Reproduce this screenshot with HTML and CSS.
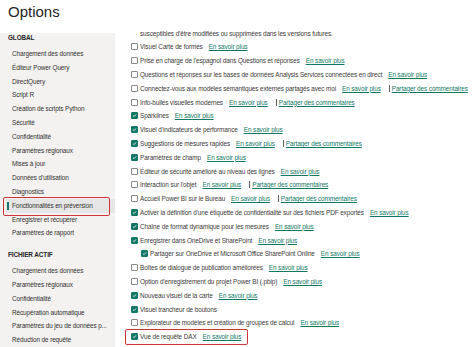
FILE: index.html
```html
<!DOCTYPE html>
<html lang="fr">
  <head>
    <meta charset="UTF-8" />
    <meta name="viewport" content="width=device-width, initial-scale=1.0" />
    <title>Options</title>
    <link rel="stylesheet" href="styles.css">
  </head>
  <body>
    <header class="title">Options</header>
    <div class="layout">
      <nav class="sidebar">
        <div class="nav-head">GLOBAL</div>
        <ul class="nav-list">
          <li>Chargement des données</li>
          <li>Éditeur Power Query</li>
          <li>DirectQuery</li>
          <li>Script R</li>
          <li>Création de scripts Python</li>
          <li>Sécurité</li>
          <li>Confidentialité</li>
          <li>Paramètres régionaux</li>
          <li>Mises à jour</li>
          <li>Données d'utilisation</li>
          <li>Diagnostics</li>
          <li class="selected">Fonctionnalités en préversion</li>
          <li>Enregistrer et récupérer</li>
          <li>Paramètres de rapport</li>
        </ul>
        <div class="nav-head second">FICHIER ACTIF</div>
        <ul class="nav-list">
          <li>Chargement des données</li>
          <li>Paramètres régionaux</li>
          <li>Confidentialité</li>
          <li>Récupération automatique</li>
          <li>Paramètres du jeu de données p...</li>
          <li>Réduction de requête</li>
        </ul>
      </nav>

      <main class="content">
        <p class="intro">susceptibles d'être modifiées ou supprimées dans les versions futures.</p>
        <ul class="features">
          <li><span class="box"></span>Visuel Carte de formes<a class="link">En savoir plus</a></li>
          <li><span class="box"></span>Prise en charge de l'espagnol dans Questions et réponses<a class="link">En savoir plus</a></li>
          <li><span class="box"></span>Questions et réponses sur les bases de données Analysis Services connectées en direct<a class="link">En savoir plus</a></li>
          <li><span class="box"></span>Connectez-vous aux modèles sémantiques externes partagés avec moi<a class="link">En savoir plus</a><a class="link feedback">Partager des commentaires</a></li>
          <li><span class="box"></span>Info-bulles visuelles modernes<a class="link">En savoir plus</a><a class="link feedback">Partager des commentaires</a></li>
          <li><span class="box checked"></span>Sparklines<a class="link">En savoir plus</a></li>
          <li><span class="box checked"></span>Visuel d'indicateurs de performance<a class="link">En savoir plus</a></li>
          <li><span class="box checked"></span>Suggestions de mesures rapides<a class="link">En savoir plus</a><a class="link feedback">Partager des commentaires</a></li>
          <li><span class="box checked"></span>Paramètres de champ<a class="link">En savoir plus</a></li>
          <li><span class="box"></span>Éditeur de sécurité amélioré au niveau des lignes<a class="link">En savoir plus</a></li>
          <li><span class="box"></span>Interaction sur l'objet<a class="link">En savoir plus</a><a class="link feedback">Partager des commentaires</a></li>
          <li><span class="box"></span>Accueil Power BI sur le Bureau<a class="link">En savoir plus</a><a class="link feedback">Partager des commentaires</a></li>
          <li><span class="box checked"></span>Activer la définition d'une étiquette de confidentialité sur des fichiers PDF exportés<a class="link">En savoir plus</a></li>
          <li><span class="box checked"></span>Chaîne de format dynamique pour les mesures<a class="link">En savoir plus</a></li>
          <li><span class="box checked"></span>Enregistrer dans OneDrive et SharePoint<a class="link">En savoir plus</a></li>
          <li class="sub"><span class="box checked"></span>Partager sur OneDrive et Microsoft Office SharePoint Online<a class="link">En savoir plus</a></li>
          <li><span class="box"></span>Boîtes de dialogue de publication améliorées<a class="link">En savoir plus</a></li>
          <li><span class="box"></span>Option d'enregistrement du projet Power BI (.pbip)<a class="link">En savoir plus</a></li>
          <li><span class="box checked"></span>Nouveau visuel de la carte<a class="link">En savoir plus</a></li>
          <li><span class="box checked"></span>Visuel trancheur de boutons</li>
          <li><span class="box"></span>Explorateur de modèles et création de groupes de calcul<a class="link">En savoir plus</a></li>
          <li class="marked"><span class="box checked"></span>Vue de requête DAX<a class="link">En savoir plus</a></li>
        </ul>
      </main>
    </div>
  </body>
</html>
```

FILE: styles.css
```css
/* page */
body {
  margin: 0;
  background-color: #fff;
  color: #323130;
  font-family: "Liberation Sans", Arial, sans-serif;
  font-size: 6.4px;
  letter-spacing: -0.1px;
  overflow: hidden;
}
.title {
  height: 28px;
  padding: 3px 0 0 8px;
  box-sizing: border-box;
  font-size: 15px;
  line-height: 18px;
  letter-spacing: 0;
  color: #252423;
}
.layout {
  display: flex;
  align-items: flex-start;
}
/* left navigation */
.sidebar {
  width: 115px;
  margin-top: 5px;
  padding-bottom: 20px;
  background-color: #f3f2f1;
}
.nav-head {
  padding-left: 8px;
  line-height: 10px;
  margin-bottom: 4px;
  font-weight: bold;
  color: #252423;
}
.nav-head.second {
  margin-top: 10px;
  margin-bottom: 4px;
}
.nav-list {
  list-style: none;
  margin: 0;
  padding: 0;
}
.nav-list li {
  height: 13.8px;
  line-height: 13.8px;
  padding-left: 12px;
  white-space: nowrap;
}
.nav-list li.selected {
  position: relative;
  margin-left: 6px;
  padding-left: 6px;
  background-color: #e6e6e6;
}
.nav-list li.selected::before {
  content: "";
  position: absolute;
  left: 1px;
  top: 3px;
  bottom: 3px;
  width: 1.5px;
  background-color: #117865;
}
.nav-list li.selected::after {
  content: "";
  position: absolute;
  left: -3px;
  right: 5px;
  top: -2px;
  bottom: -3px;
  border: 1.5px solid #d13438;
  border-radius: 2px;
}
/* preview features */
.content {
  flex: 1;
  padding-left: 16px;
}
.intro {
  margin: 0;
  height: 12px;
  line-height: 12px;
  padding-left: 9px;
  color: #3b3a39;
}
.features {
  list-style: none;
  margin: 0;
  padding: 0;
}
.features li {
  display: flex;
  align-items: center;
  height: 13.8px;
  white-space: nowrap;
  color: #3b3a39;
}
.features li.sub {
  padding-left: 10px;
}
.features li.marked {
  position: relative;
}
.features li.marked::after {
  content: "";
  position: absolute;
  left: -6px;
  width: 121px;
  top: -1px;
  bottom: -1px;
  border: 1.5px solid #d13438;
  border-radius: 2px;
}
.box {
  width: 7px;
  height: 7px;
  margin-right: 2px;
  box-sizing: border-box;
  border: 1px solid #8a8886;
  border-radius: 1px;
  background-color: #fff;
  flex: none;
}
.box.checked {
  border-color: #117865;
  background: #117865 url("data:image/svg+xml;utf8,<svg xmlns='http://www.w3.org/2000/svg' viewBox='0 0 10 10'><polyline points='2,5.2 4.2,7.3 8,2.8' fill='none' stroke='white' stroke-width='1.6'/></svg>") center / 100% 100% no-repeat;
}
.link {
  margin-left: 6px;
  color: #117865;
  text-decoration: underline;
}
.link.feedback {
  margin-left: 8px;
  padding-left: 2px;
  border-left: 1px solid #605e5c;
  line-height: 7px;
}
```
